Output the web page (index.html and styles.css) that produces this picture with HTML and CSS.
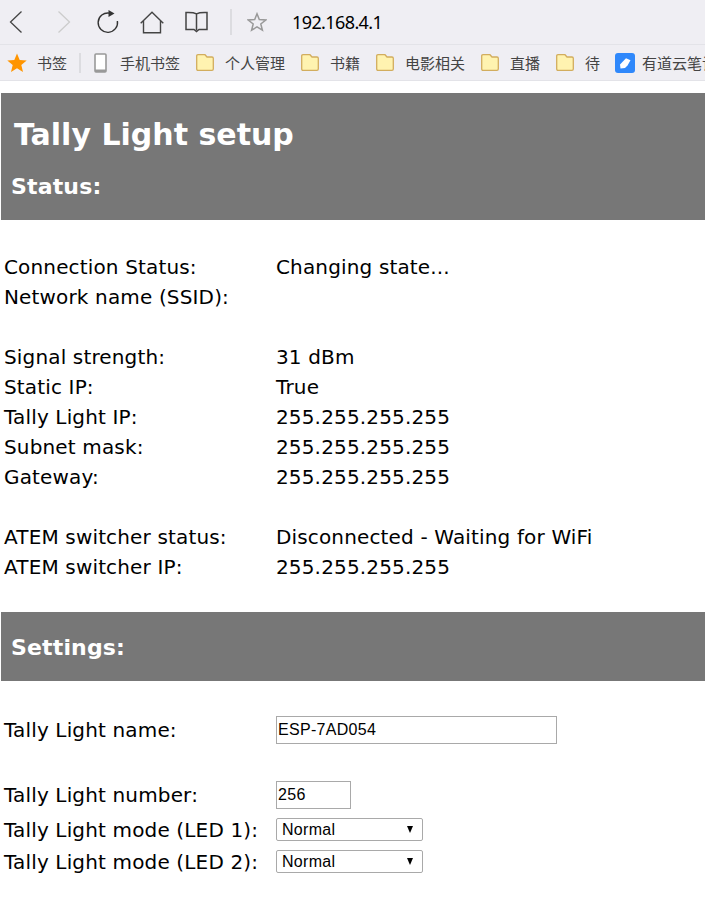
FILE: index.html
```html
<!DOCTYPE html>
<html lang="en">

<head>
	<meta charset="UTF-8">
	<title>Tally Light setup</title>
	<link rel="stylesheet" href="styles.css">
</head>

<body>
	<!-- browser toolbar -->
	<div class="toolbar">
		<svg class="nav-icon back" width="14" height="24" viewBox="0 0 14 24"><path d="M12.500 1.500 1.500 12l11 10.500" fill="none" stroke="#444" stroke-width="1.300"/></svg>
		<svg class="nav-icon forward" width="14" height="24" viewBox="0 0 14 24"><path d="M1.500 1.500 12.500 12l-11 10.500" fill="none" stroke="#ccc" stroke-width="1.300"/></svg>
		<svg class="nav-icon reload" width="22" height="24" viewBox="0 0 22 24"><path d="M12.500 3.100A9.700 9.700 0 1 0 20.400 11" fill="none" stroke="#333" stroke-width="1.400"/><path d="M11.500 0 17.500 3.500 11.500 7z" fill="#333"/></svg>
		<svg class="nav-icon home" width="24" height="23" viewBox="0 0 24 23"><path d="M0.700 12.300 12 1.200 23.300 12.300M3.500 10V21.700H20.500V10" fill="none" stroke="#444" stroke-width="1.400"/></svg>
		<svg class="nav-icon book" width="23" height="22" viewBox="0 0 23 22"><path d="M11.500 2.800C9 1.500 5 1.300 1 1.500V18.500H9L11.500 20.500 14 18.500H22V1.500C18 1.300 14 1.500 11.500 2.800ZM11.500 2.800V19" fill="none" stroke="#444" stroke-width="1.500"/></svg>
		<div class="toolbar-line"></div>
		<svg class="nav-icon fav" width="20" height="20" viewBox="0 0 20 20"><path d="M10 1.800 12.300 7.500 18.700 8 13.800 12 15.400 18.200 10 14.900 4.600 18.200 6.200 12 1.300 8 7.700 7.500Z" fill="none" stroke="#999" stroke-width="1.500"/></svg>
		<span class="url">192.168.4.1</span>
	</div>

	<!-- bookmarks bar -->
	<div class="bookmarks">
		<svg class="mark-star" width="20" height="20" viewBox="0 0 20 20"><path d="M10 0.500 12.700 7 19.700 7.500 14.300 12 16 19 10 15.200 4 19 5.700 12 0.300 7.500 7.300 7Z" fill="#ff9500"/></svg>
		<span class="mark mark-first">书签</span>
		<div class="mark-line"></div>
		<svg class="mark-phone" width="13" height="20" viewBox="0 0 13 20"><rect x="1" y="1" width="11" height="18" rx="1" fill="#fff" stroke="#999" stroke-width="1.600"/><rect x="1" y="16.500" width="11" height="2.500" fill="#999"/></svg>
		<span class="mark">手机书签</span>
		<svg class="folder" width="18" height="17" viewBox="0 0 18 17"><path d="M0.700 2Q0.700 0.700 2 0.700H9L11 3H16Q17.300 3 17.300 4.300V15Q17.300 16.300 16 16.300H2Q0.700 16.300 0.700 15Z" fill="#fff3b0" stroke="#d2ad5e" stroke-width="1.300"/></svg>
		<span class="mark">个人管理</span>
		<svg class="folder" width="18" height="17" viewBox="0 0 18 17"><path d="M0.700 2Q0.700 0.700 2 0.700H9L11 3H16Q17.300 3 17.300 4.300V15Q17.300 16.300 16 16.300H2Q0.700 16.300 0.700 15Z" fill="#fff3b0" stroke="#d2ad5e" stroke-width="1.300"/></svg>
		<span class="mark">书籍</span>
		<svg class="folder" width="18" height="17" viewBox="0 0 18 17"><path d="M0.700 2Q0.700 0.700 2 0.700H9L11 3H16Q17.300 3 17.300 4.300V15Q17.300 16.300 16 16.300H2Q0.700 16.300 0.700 15Z" fill="#fff3b0" stroke="#d2ad5e" stroke-width="1.300"/></svg>
		<span class="mark">电影相关</span>
		<svg class="folder" width="18" height="17" viewBox="0 0 18 17"><path d="M0.700 2Q0.700 0.700 2 0.700H9L11 3H16Q17.300 3 17.300 4.300V15Q17.300 16.300 16 16.300H2Q0.700 16.300 0.700 15Z" fill="#fff3b0" stroke="#d2ad5e" stroke-width="1.300"/></svg>
		<span class="mark">直播</span>
		<svg class="folder" width="18" height="17" viewBox="0 0 18 17"><path d="M0.700 2Q0.700 0.700 2 0.700H9L11 3H16Q17.300 3 17.300 4.300V15Q17.300 16.300 16 16.300H2Q0.700 16.300 0.700 15Z" fill="#fff3b0" stroke="#d2ad5e" stroke-width="1.300"/></svg>
		<span class="mark">待</span>
		<svg class="note-icon" width="20" height="20" viewBox="0 0 20 20"><rect width="20" height="20" rx="3" fill="#2f88fb"/><path d="M5 11.500 11 5.200 15.500 7.300 12.500 12.500 10 15 5.500 15.500Z" fill="#fff"/></svg>
		<span class="mark mark-last">有道云笔记</span>
	</div>

	<!-- page -->
	<div class="page">
		<div class="band band-top">
			<h1>Tally Light setup</h1>
			<h2>Status:</h2>
		</div>

		<div class="status">
			<div>Connection Status:</div><div>Changing state...</div>
			<div>Network name (SSID):</div><div></div>
			<div class="blank"></div>
			<div>Signal strength:</div><div>31 dBm</div>
			<div>Static IP:</div><div>True</div>
			<div>Tally Light IP:</div><div>255.255.255.255</div>
			<div>Subnet mask:</div><div>255.255.255.255</div>
			<div>Gateway:</div><div>255.255.255.255</div>
			<div class="blank"></div>
			<div>ATEM switcher status:</div><div>Disconnected - Waiting for WiFi</div>
			<div>ATEM switcher IP:</div><div>255.255.255.255</div>
		</div>

		<div class="band band-settings">
			<h2>Settings:</h2>
		</div>

		<form class="settings">
			<div class="row row-name">
				<label>Tally Light name:</label>
				<input class="input-name" type="text" value="ESP-7AD054">
			</div>
			<div class="row row-number">
				<label>Tally Light number:</label>
				<input class="input-number" type="text" value="256">
			</div>
			<div class="row row-mode">
				<label>Tally Light mode (LED 1):</label>
				<div class="select-wrap">
					<select><option>Normal</option></select>
				</div>
			</div>
			<div class="row row-mode">
				<label>Tally Light mode (LED 2):</label>
				<div class="select-wrap">
					<select><option>Normal</option></select>
				</div>
			</div>
		</form>
	</div>
</body>

</html>
```

FILE: styles.css
```css
* {
	box-sizing: border-box;
	margin: 0;
	padding: 0;
}

html,
body {
	height: 100%;
}

body {
	background-color: #fff;
	color: #000;
	font-family: "DejaVu Sans", Verdana, sans-serif;
	font-size: 20px;
	letter-spacing: 0.15px;
	overflow: hidden;
}

/* browser toolbar */
.toolbar {
	height: 45px;
	background-color: #efeef3;
	border-bottom: 1px solid #e3e3e8;
	display: flex;
	align-items: center;
}

.nav-icon {
	flex: none;
}

.back {
	margin-left: 9px;
}

.forward {
	margin-left: 34px;
}

.reload {
	margin-left: 26px;
}

.home {
	margin-left: 21px;
}

.book {
	margin-left: 21px;
}

.toolbar-line {
	width: 2px;
	height: 26px;
	background-color: #dcdce0;
	margin-left: 22px;
}

.fav {
	margin-left: 15px;
}

.url {
	margin-left: 25px;
	font-family: "Noto Sans", sans-serif;
	font-size: 18px;
	letter-spacing: -0.6px;
}

/* bookmarks bar */
.bookmarks {
	height: 36px;
	background-color: #efeef3;
	border-bottom: 1px solid #e3e3e8;
	display: flex;
	align-items: center;
	white-space: nowrap;
	overflow: hidden;
}

.mark {
	font-family: "Noto Sans CJK SC", sans-serif;
	font-size: 15px;
	letter-spacing: 0;
	color: #444;
	flex: none;
	margin-left: 11px;
	margin-right: 16px;
}

.mark-star {
	flex: none;
	margin-left: 7px;
}

.mark-first {
	margin-left: 10px;
	margin-right: 12px;
}

.mark-line {
	flex: none;
	width: 2px;
	height: 20px;
	background-color: #dcdce0;
}

.mark-phone {
	flex: none;
	margin-left: 13px;
	margin-right: 2px;
}

.folder {
	flex: none;
}

.note-icon {
	flex: none;
	margin-left: -1px;
}

.mark-last {
	margin-left: 7px;
}

/* page */
.page {
	padding: 12px 0 0 1px;
}

.band {
	background-color: #777;
	color: #fff;
}

.band-top {
	height: 127px;
	padding-top: 24px;
}

.band-top h1 {
	font-size: 30px;
	line-height: 36px;
	letter-spacing: 0;
	margin-left: 13px;
}

.band-top h2 {
	margin-top: 21px;
}

h2 {
	font-size: 22px;
	line-height: 26px;
	margin-left: 10px;
}

.band-settings {
	height: 69px;
	display: flex;
	align-items: center;
	padding-top: 2px;
}

.status {
	display: grid;
	grid-template-columns: 272px 1fr;
	grid-auto-rows: 30px;
	align-items: center;
	padding: 32px 0 30px 3px;
}

.blank {
	grid-column: 1 / 3;
}

.settings {
	padding: 35px 0 0 3px;
}

.row {
	display: flex;
	align-items: center;
}

.row label {
	width: 272px;
	flex: none;
}

.row-number {
	margin-top: 37px;
}

.row-mode {
	margin-top: 9px;
	height: 23px;
}

input,
select {
	font-family: "Liberation Sans", Arial, sans-serif;
	font-size: 16px;
	letter-spacing: 0.3px;
	color: #000;
}

input {
	height: 28px;
	border: 1px solid #a9a9a9;
	padding: 0 1px;
	outline: none;
}

.input-name {
	width: 281px;
}

.input-number {
	width: 75px;
}

.select-wrap {
	position: relative;
	width: 147px;
	height: 23px;
}

select {
	appearance: none;
	display: block;
	width: 100%;
	height: 100%;
	background-color: #fff;
	border: 1px solid #a9a9a9;
	border-radius: 2px;
	padding-left: 5px;
}

/* arrow of the select */
.select-wrap::after {
	content: "";
	position: absolute;
	top: 8px;
	right: 10px;
	border-left: 3.5px solid transparent;
	border-right: 3.5px solid transparent;
	border-top: 7px solid #000;
}
```
